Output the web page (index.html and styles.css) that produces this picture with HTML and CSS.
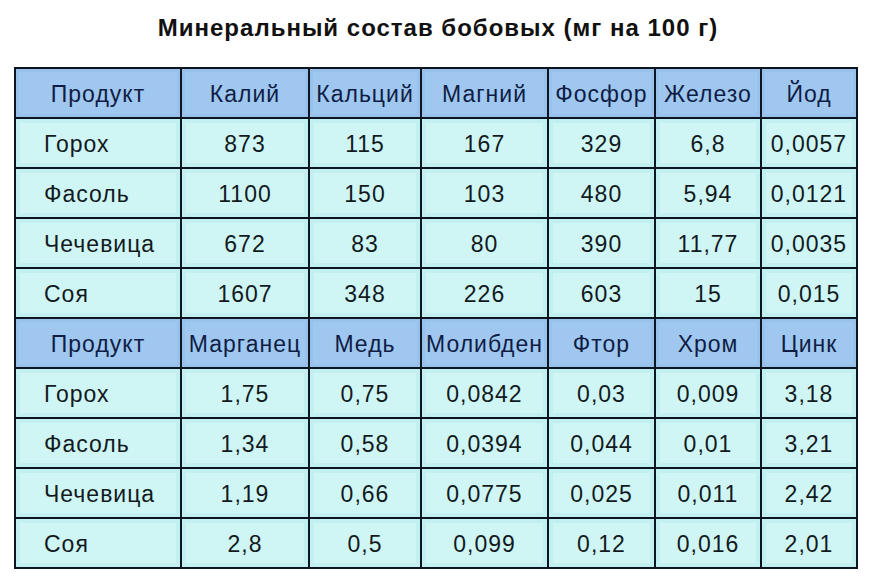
FILE: index.html
```html
<!DOCTYPE html>
<html lang="ru">
<head>
<meta charset="utf-8">
<title>Минеральный состав бобовых</title>
<link rel="stylesheet" href="styles.css">
</head>
<body>
<h1 class="title">Минеральный состав бобовых (мг на 100 г)</h1>
<table class="grid">
  <colgroup>
    <col class="c1"><col class="c2"><col class="c3"><col class="c4"><col class="c5"><col class="c6"><col class="c7">
  </colgroup>
  <tbody>
    <tr class="head"><th>Продукт</th><th>Калий</th><th>Кальций</th><th>Магний</th><th>Фосфор</th><th>Железо</th><th>Йод</th></tr>
    <tr><td class="name">Горох</td><td>873</td><td>115</td><td>167</td><td>329</td><td>6,8</td><td>0,0057</td></tr>
    <tr><td class="name">Фасоль</td><td>1100</td><td>150</td><td>103</td><td>480</td><td>5,94</td><td>0,0121</td></tr>
    <tr><td class="name">Чечевица</td><td>672</td><td>83</td><td>80</td><td>390</td><td>11,77</td><td>0,0035</td></tr>
    <tr><td class="name">Соя</td><td>1607</td><td>348</td><td>226</td><td>603</td><td>15</td><td>0,015</td></tr>
    <tr class="head"><th>Продукт</th><th>Марганец</th><th>Медь</th><th>Молибден</th><th>Фтор</th><th>Хром</th><th>Цинк</th></tr>
    <tr><td class="name">Горох</td><td>1,75</td><td>0,75</td><td>0,0842</td><td>0,03</td><td>0,009</td><td>3,18</td></tr>
    <tr><td class="name">Фасоль</td><td>1,34</td><td>0,58</td><td>0,0394</td><td>0,044</td><td>0,01</td><td>3,21</td></tr>
    <tr><td class="name">Чечевица</td><td>1,19</td><td>0,66</td><td>0,0775</td><td>0,025</td><td>0,011</td><td>2,42</td></tr>
    <tr><td class="name">Соя</td><td>2,8</td><td>0,5</td><td>0,099</td><td>0,12</td><td>0,016</td><td>2,01</td></tr>
  </tbody>
</table>
</body>
</html>
```
FILE: styles.css
```css
html, body {
  margin: 0;
  padding: 0;
  background: #ffffff;
}
body {
  width: 874px;
  height: 586px;
  overflow: hidden;
  font-family: "Liberation Sans", Arial, sans-serif;
}
.title {
  margin: 0;
  padding-top: 14px;
  height: 40px;
  text-align: center;
  font-size: 24px;
  font-weight: bold;
  letter-spacing: 1px;
  color: #111111;
  line-height: 28px;
  padding-left: 2px;
}
.grid {
  margin: 13px 0 0 14px;
  border-collapse: collapse;
  table-layout: fixed;
  width: 844px;
  border: 2px solid #0b1620;
}
.c1 { width: 166px; }
.c2 { width: 128px; }
.c3 { width: 112px; }
.c4 { width: 127px; }
.c5 { width: 107px; }
.c6 { width: 106px; }
.c7 { width: 96px; }
.grid th, .grid td {
  border: 2px solid #0b1620;
  height: 50px;
  padding: 3px 0 0 0;
  text-align: center;
  font-size: 23px;
  letter-spacing: 1px;
  white-space: nowrap;
  overflow: hidden;
  box-sizing: border-box;
}
.grid th {
  font-weight: normal;
  background: #9fc7ef;
  color: #0f1d45;
  box-shadow: inset 0 0 0 3px #98c2ec;
}
.grid td {
  background: #cff6f5;
  color: #121a1e;
  box-shadow: inset 0 0 0 4px #c2eff0;
}
.grid td.name {
  text-align: left;
  padding-left: 28px;
}
```
